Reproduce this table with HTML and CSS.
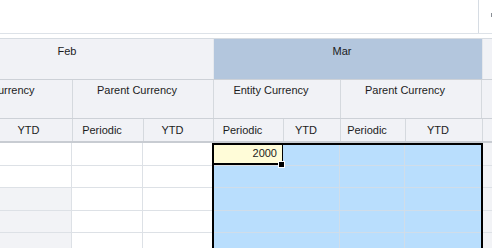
FILE: index.html
```html
<!DOCTYPE html>
<html>
<head>
<meta charset="utf-8">
<link rel="stylesheet" href="styles.css">
</head>
<body>
<div class="toolbar">
  <div class="tb-main"></div>
  <div class="tb-side"><span class="tb-tick"></span></div>
</div>
<div class="spacer"></div>
<div class="grid">
  <div class="head">
    <div class="inner">
      <div class="hrow h1">
        <div class="feb">Feb</div>
        <div class="mar">Mar</div>
        <div class="apr"></div>
      </div>
      <div class="hrow h2">
        <div class="w139">Entity Currency</div>
        <div class="w141">Parent Currency</div>
        <div class="w127">Entity Currency</div>
        <div class="w141">Parent Currency</div>
        <div class="wrest"></div>
      </div>
      <div class="hrow h3">
        <div class="c0">Periodic</div>
        <div class="c1">YTD</div>
        <div class="c2">Periodic</div>
        <div class="c3">YTD</div>
        <div class="c4">Periodic</div>
        <div class="c5">YTD</div>
        <div class="c6">Periodic</div>
        <div class="c7">YTD</div>
        <div class="wrest"></div>
      </div>
    </div>
  </div>
  <div class="data">
    <div class="inner">
      <div class="drow tall">
        <div class="c0"></div><div class="c1"></div><div class="c2"></div><div class="c3"></div>
        <div class="c4 active">2000</div><div class="c5 sel"></div><div class="c6 sel"></div><div class="c7 sel"></div><div class="wrest off"></div>
      </div>
      <div class="drow">
        <div class="c0"></div><div class="c1"></div><div class="c2"></div><div class="c3"></div>
        <div class="c4 sel nosep"></div><div class="c5 sel"></div><div class="c6 sel"></div><div class="c7 sel"></div><div class="wrest off"></div>
      </div>
      <div class="drow tall">
        <div class="c0 off"></div><div class="c1 off"></div><div class="c2"></div><div class="c3"></div>
        <div class="c4 sel nosep"></div><div class="c5 sel"></div><div class="c6 sel"></div><div class="c7 sel"></div><div class="wrest off"></div>
      </div>
      <div class="drow">
        <div class="c0 off"></div><div class="c1 off"></div><div class="c2"></div><div class="c3"></div>
        <div class="c4 sel nosep"></div><div class="c5 sel"></div><div class="c6 sel"></div><div class="c7 sel"></div><div class="wrest off"></div>
      </div>
      <div class="drow tall">
        <div class="c0 off"></div><div class="c1 off"></div><div class="c2"></div><div class="c3"></div>
        <div class="c4 sel nosep"></div><div class="c5 sel"></div><div class="c6 sel"></div><div class="c7 sel"></div><div class="wrest off"></div>
      </div>
    </div>
    <div class="sel-frame"></div>
    <div class="active-frame"></div>
    <div class="handle"></div>
  </div>
</div>
</body>
</html>
```

FILE: styles.css
```css
html, body {
  margin: 0;
  padding: 0;
}
body {
  width: 492px;
  height: 248px;
  overflow: hidden;
  background: #ffffff;
  font-family: "Liberation Sans", Arial, sans-serif;
  font-size: 11px;
  color: #1c1c1c;
}

/* top toolbar strip */
.toolbar {
  display: flex;
  height: 34px;
  box-sizing: border-box;
  border-bottom: 1px solid #dde2e8;
}
.tb-main {
  flex: 0 0 478px;
}
.tb-side {
  flex: 1;
  border-left: 1px solid #d6dce3;
  display: flex;
  justify-content: flex-end;
  align-items: flex-start;
  padding-top: 13px;
}
.tb-tick {
  display: block;
  width: 1px;
  height: 4px;
  background: #8a8f96;
}
.spacer {
  height: 4px;
}

/* grid */
.grid {
  width: 492px;
  overflow: hidden;
}
.inner {
  margin-left: -67px;
  width: 760px;
}
.head {
  border-top: 1px solid #d6dbe1;
  background: #f1f2f6;
}
.hrow {
  display: flex;
  box-sizing: border-box;
}
.hrow > div {
  flex: none;
  box-sizing: border-box;
  border-left: 1px solid #d5d9de;
  text-align: center;
  padding-right: 12px;
  white-space: nowrap;
  overflow: hidden;
}
.h1 {
  height: 41px;
  border-bottom: 1px solid #cdd1d7;
}
.h1 > div {
  padding-top: 6px;
  line-height: 13px;
}
.h2 {
  height: 39px;
  border-bottom: 1px solid #cdd1d7;
}
.h2 > div {
  padding-top: 4px;
  line-height: 13px;
}
.h3 {
  height: 24px;
  border-bottom: 2px solid #c8ccd2;
}
.h3 > div {
  padding-top: 1px;
  line-height: 21px;
}

.h1 .feb {
  width: 280px;
  border-left: none;
}
.h1 .mar {
  width: 269px;
  background: #b3c6dd;
  border-left: 1px solid #e6e9ee;
}
.h1 .apr {
  width: 120px;
  border-left: 1px solid #e4e7ec;
}

.w139 { width: 139px; }
.w141 { width: 141px; }
.w127 { width: 127px; }
.wrest { width: 120px; }

.c0 { width: 63px; }
.c1 { width: 76px; }
.c2 { width: 71px; }
.c3 { width: 70px; }
.c4 { width: 70px; }
.c5 { width: 57px; }
.c6 { width: 65px; }
.c7 { width: 77px; }

/* data rows */
.data {
  position: relative;
  height: 105px;
  overflow: hidden;
}
.drow {
  display: flex;
  height: 22px;
}
.drow.tall {
  height: 23px;
}
.drow > div {
  flex: none;
  box-sizing: border-box;
  background: #ffffff;
  border-right: 1px solid #dde1e6;
  border-bottom: 1px solid #dde1e6;
}
.drow > .off {
  background: #f2f3f6;
}
.drow > .sel {
  background: #b9defd;
  border-color: #d0dde9;
}
.drow > .sel.nosep {
  border-right-color: #b9defd;
}
.drow > .active {
  background: #fffcd8;
  text-align: right;
  padding: 4px 5px 0 0;
  line-height: 13px;
  color: #1c1c1c;
}

/* selection overlay */
.sel-frame {
  position: absolute;
  left: 212px;
  top: 0;
  width: 271px;
  height: 200px;
  box-sizing: border-box;
  border: 2px solid #000000;
}
.active-frame {
  position: absolute;
  left: 212px;
  top: 0;
  width: 71px;
  height: 22px;
  box-sizing: border-box;
  border-right: 1px solid #000000;
  border-bottom: 2px solid #000000;
}
.handle {
  position: absolute;
  left: 278px;
  top: 18px;
  width: 7px;
  height: 7px;
  box-sizing: border-box;
  background: #000000;
  border: 1px solid #ffffff;
}
```
